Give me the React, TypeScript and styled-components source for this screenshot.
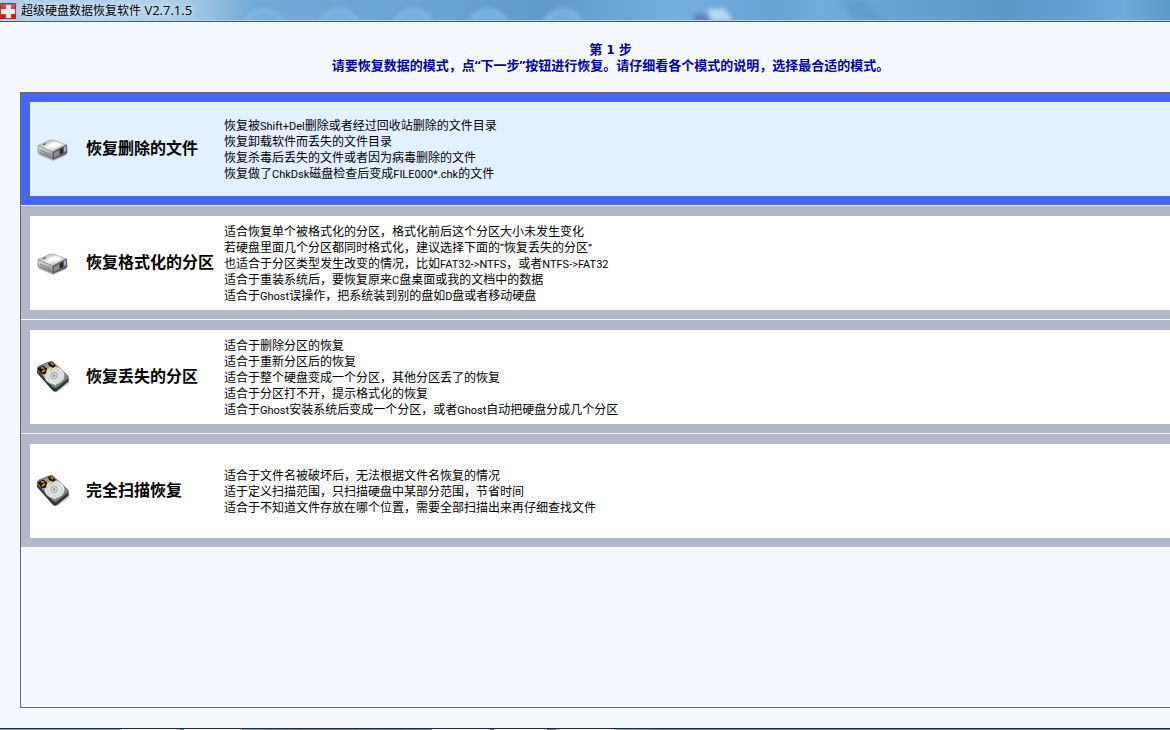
import React, { useState } from "react";
import styled, { createGlobalStyle } from "styled-components";

const cjk = '"Noto Sans CJK SC", sans-serif';

const GlobalStyle = createGlobalStyle`
  *, *::before, *::after { box-sizing: border-box; }
  body { margin: 0; background: #f4f8ff; }
`;

const Window = styled.div`
  display: flex;
  flex-direction: column;
  min-height: 100vh;
  overflow: hidden;
  font-family: ${cjk};
  font-size: 12px;
  line-height: 16px;
  color: #000;
`;

const TitleBar = styled.header`
  position: relative;
  display: flex;
  align-items: center;
  gap: 5px;
  height: 22px;
  border-bottom: 1px solid #44586c;
  box-shadow: inset 0 -1px #b4d4ee;
  background: linear-gradient(90deg, #aacbe6 0%, #b0d0ea 14%, #9cc5e5 17%, #70a8d6 22%, #69a4d3 38%, #5f9ac9 46%, #74aede 58%, #66a3d3 66%, #70abd9 70%, #5b97c6 86%, #649fd2 92%, #6eabd9 96%, #5c98c8 100%);
`;

const Glass = styled.svg`
  position: absolute;
  inset: 0;
  width: 100%;
  height: 20px;
`;

const AppIcon = styled.svg`
  position: relative;
  flex: none;
  width: 16px;
  height: 16px;
`;

const AppTitle = styled.h1`
  position: relative;
  margin: 0;
  font-family: "Open Sans", ${cjk};
  font-size: 12px;
  font-weight: 400;
  line-height: 16px;
  white-space: nowrap;
  text-shadow: 0 0 6px #e4f1fb, 0 0 6px #e4f1fb;
`;

const Version = styled.span`
  font-size: 13px;
  line-height: 1;
`;

const Content = styled.main`
  flex: 1;
  display: flex;
  flex-direction: column;
  padding: 19px 0 20px 20px;
`;

const Instructions = styled.div`
  padding: 0 0 19px 31px;
  text-align: center;
  color: #0000a8;
  font-family: "Open Sans", ${cjk};
  font-size: 13px;
  font-weight: 700;
  line-height: 16px;

  p, h2 { margin: 0; font-size: inherit; }
`;

const StepNumber = styled.span`
  font-family: "DejaVu Sans Condensed", "DejaVu Sans", sans-serif;
  line-height: 1;
`;

const ModeList = styled.ul`
  flex: 1;
  display: flex;
  flex-direction: column;
  gap: 1px;
  min-height: 616px;
  margin: 0;
  padding: 0;
  list-style: none;
  border: 1px solid #666;
  border-right: 0;
`;

const ModeButton = styled.button<{ $selected: boolean; $first: boolean }>`
  display: grid;
  grid-template-columns: 56px 138px 1fr;
  align-items: center;
  width: 100%;
  min-height: ${(p) => (p.$first ? 112 : 113)}px;
  padding: 0;
  border: solid ${(p) => (p.$selected ? "#4664ff" : "#b2b8c7")};
  border-width: ${(p) => (p.$first ? 9 : 10)}px 0 9px 9px;
  border-radius: 0;
  background: ${(p) => (p.$selected ? "#e2f0ff" : "#fff")};
  color: #000;
  font: inherit;
  text-align: left;
  cursor: pointer;
`;

const DriveIcon = styled.svg`
  width: 34px;
  height: 34px;
  margin-left: 6px;
`;

const ModeName = styled.strong`
  padding-bottom: 4px;
  font-size: 16px;
  line-height: 20px;
  white-space: nowrap;
`;

const Description = styled.span`
  display: flex;
  flex-direction: column;
  white-space: nowrap;
`;

const Line = styled.span`
  height: 16px;
`;

const Latin = styled.span`
  font-family: Roboto, sans-serif;
  font-size: 11px;
`;

const Quote = styled.span`
  font-family: "Open Sans", sans-serif;
`;

const Taskbar = styled.footer`
  height: 2px;
  border-top: 1px solid #1c2c3c;
  background: linear-gradient(90deg, #86a8c8 122px, #e6eaf0 122px 180px, #667c94 180px 184px, #e6eaf0 184px 242px, #86a8c8 242px, #7c8490 300px, #7890a8 432px, #e6eaf0 432px 490px, #667c94 490px 494px, #f4f6fa 494px 547px, #667c94 547px 556px, #e6eaf0 556px 614px, #a0b8d0 614px, #7890a8 660px);
`;

function mixed(text: string) {
  return text
    .split(/([\x21-\x7e“”]+)/)
    .map((part, i) => (i % 2 ? <Latin key={i}>{part}</Latin> : part));
}

function BoxDrive() {
  return (
    <DriveIcon viewBox="0 0 34 34" aria-hidden="true">
      <defs>
        <linearGradient id="boxTop" x1="0" y1="0" x2="1" y2="1">
          <stop offset="0" stopColor="#a4a4a4" />
          <stop offset=".5" stopColor="#f4f4f4" />
          <stop offset="1" stopColor="#989898" />
        </linearGradient>
        <linearGradient id="boxLeft" x1="0" y1="0" x2="0" y2="1">
          <stop offset="0" stopColor="#e4e4e4" />
          <stop offset="1" stopColor="#808080" />
        </linearGradient>
      </defs>
      <path d="M2 21l15 7 14-6-2 2-12 5-14-6z" fill="#777" opacity=".4" />
      <path d="M2 13.500L13 8.500q3-.8 6 0l11.500 4.500-13.500 7z" fill="url(#boxTop)" stroke="#a0a0a0" strokeWidth=".7" />
      <path d="M2 13.500L17 20v7.500L3 21.500q-1-.5-1-1.500z" fill="url(#boxLeft)" stroke="#858585" strokeWidth=".7" />
      <path d="M17 20l13.500-7 .5 7.500-1 1.500-13 5.500z" fill="#606063" stroke="#505050" strokeWidth=".7" />
      <path d="M18 21l5-2.500v4.500l-5 2.500z" fill="#8e8e8e" />
      <path d="M24 17.500l3-1.500v5l-3 1.500z" fill="#272738" />
      <path d="M28 15l2-1v5l-2 1z" fill="#aaa5df" />
      <path d="M4 18l11 5M4 20.500l11 5" stroke="#707070" strokeWidth=".8" />
      <path d="M7 13l3-1.500" stroke="#555" strokeWidth="1.200" />
      <path d="M12 13q3-3 8-2.500 6 1 4 3-4 3-8 2-4-1-4-2.500z" fill="#fff" opacity=".8" />
    </DriveIcon>
  );
}

function OpenDrive() {
  return (
    <DriveIcon viewBox="0 0 34 34" aria-hidden="true">
      <defs>
        <linearGradient id="openBody" x1="0" y1="0" x2="1" y2="1">
          <stop offset="0" stopColor="#777" />
          <stop offset=".5" stopColor="#b4b8b8" />
          <stop offset="1" stopColor="#4c5151" />
        </linearGradient>
        <radialGradient id="platter">
          <stop offset="0" stopColor="#aaa" />
          <stop offset=".4" stopColor="#e8e8e8" />
          <stop offset=".75" stopColor="#d3d6d6" />
          <stop offset="1" stopColor="#f2f2f2" />
        </radialGradient>
      </defs>
      <path d="M18 31l14-11 2 1-1 3-12 8z" fill="#888" opacity=".4" />
      <path d="M1 9v4l16 18q2 1.500 4 0l11-9q1-1 .8-4L19 28z" fill="#303637" />
      <path d="M1 9Q1 7 3 6L13 2q2-1 4 0l15 14q1 1.500-.5 3L21 27.500q-2 1-4-.5L2 11z" fill="url(#openBody)" stroke="#4c5050" strokeWidth=".7" />
      <ellipse cx="18.500" cy="15.500" rx="10" ry="9" fill="url(#platter)" stroke="#8c9090" strokeWidth=".6" />
      <circle cx="18" cy="15.500" r="3.500" fill="#d0d0d0" stroke="#999" strokeWidth=".7" />
      <circle cx="18" cy="15.500" r="1.200" fill="#999" />
      <path d="M2 8l5-2.500 4 3-1 5-4 1-4-5z" fill="#171411" />
      <path d="M12 3l4-1 4 4-3 2-4-2z" fill="#1d1711" />
      <path d="M5 7.500l3 1M6 12l3-2M15 3l2 2" stroke="#ef9320" strokeWidth="1.600" />
      <path d="M14.500 7l1 4" stroke="#f3bd59" strokeWidth="2" />
      <path d="M14 20l6 5M24 9l4 6" stroke="#fff" opacity=".8" />
    </DriveIcon>
  );
}

const modes = [
  {
    name: "恢复删除的文件",
    Icon: BoxDrive,
    lines: [
      "恢复被Shift+Del删除或者经过回收站删除的文件目录",
      "恢复卸载软件而丢失的文件目录",
      "恢复杀毒后丢失的文件或者因为病毒删除的文件",
      "恢复做了ChkDsk磁盘检查后变成FILE000*.chk的文件",
    ],
  },
  {
    name: "恢复格式化的分区",
    Icon: BoxDrive,
    lines: [
      "适合恢复单个被格式化的分区，格式化前后这个分区大小未发生变化",
      "若硬盘里面几个分区都同时格式化，建议选择下面的“恢复丢失的分区”",
      "也适合于分区类型发生改变的情况，比如FAT32->NTFS，或者NTFS->FAT32",
      "适合于重装系统后，要恢复原来C盘桌面或我的文档中的数据",
      "适合于Ghost误操作，把系统装到别的盘如D盘或者移动硬盘",
    ],
  },
  {
    name: "恢复丢失的分区",
    Icon: OpenDrive,
    lines: [
      "适合于删除分区的恢复",
      "适合于重新分区后的恢复",
      "适合于整个硬盘变成一个分区，其他分区丢了的恢复",
      "适合于分区打不开，提示格式化的恢复",
      "适合于Ghost安装系统后变成一个分区，或者Ghost自动把硬盘分成几个分区",
    ],
  },
  {
    name: "完全扫描恢复",
    Icon: OpenDrive,
    lines: [
      "适合于文件名被破坏后，无法根据文件名恢复的情况",
      "适于定义扫描范围，只扫描硬盘中某部分范围，节省时间",
      "适合于不知道文件存放在哪个位置，需要全部扫描出来再仔细查找文件",
    ],
  },
];

export default function App() {
  const [selected, setSelected] = useState(0);
  return (
    <Window lang="zh-CN">
      <GlobalStyle />
      <TitleBar>
        <Glass aria-hidden="true">
          <defs>
            <filter id="soft" x="-20%" y="-50%" width="140%" height="200%">
              <feGaussianBlur stdDeviation="2" />
            </filter>
          </defs>
          <g filter="url(#soft)">
            <g fill="#74b2e4" stroke="#8cc0ea" strokeWidth="3" opacity=".8">
              <circle cx="264" cy="30" r="20" />
              <circle cx="339" cy="30" r="20" />
              <circle cx="413" cy="30" r="20" />
              <circle cx="488" cy="30" r="20" />
              <circle cx="563" cy="30" r="20" />
            </g>
            <path d="M694 14h18v10h-18z" fill="#6484b8" />
            <path d="M707 9h18l8 12h-22z" fill="#b8d8f4" />
            <path d="M840 0h24l18 20h-26z" fill="#5590c0" opacity=".4" />
          </g>
        </Glass>
        <AppIcon viewBox="0 0 16 16" aria-hidden="true">
          <defs>
            <linearGradient id="red" x1="0" y1="0" x2="0" y2="1">
              <stop offset="0" stopColor="#d86a68" />
              <stop offset=".5" stopColor="#c41a1a" />
              <stop offset="1" stopColor="#e01010" />
            </linearGradient>
          </defs>
          <path d="M0 0h16v16H0z" fill="url(#red)" />
          <path d="M.5 .5h15v15H.5z" fill="none" stroke="#a03030" />
          <path d="M6 2h5v4h4v5h-4v4H6v-4H1V6h5z" fill="#f2f2f2" stroke="#b9a0a0" strokeWidth=".5" />
        </AppIcon>
        <AppTitle>
          超级硬盘数据恢复软件<Version> V2.7.1.5</Version>
        </AppTitle>
      </TitleBar>
      <Content>
        <Instructions>
          <h2>
            第<StepNumber> 1 </StepNumber>步
          </h2>
          <p>
            请要恢复数据的模式，点<Quote>“</Quote>下一步<Quote>”</Quote>按钮进行恢复。请仔细看各个模式的说明，选择最合适的模式。
          </p>
        </Instructions>
        <ModeList>
          {modes.map(({ name, Icon, lines }, i) => (
            <li key={name}>
              <ModeButton
                type="button"
                aria-pressed={selected === i}
                $selected={selected === i}
                $first={i === 0}
                onClick={() => setSelected(i)}
              >
                <Icon />
                <ModeName>{name}</ModeName>
                <Description>
                  {lines.map((line) => (
                    <Line key={line}>{mixed(line)}</Line>
                  ))}
                </Description>
              </ModeButton>
            </li>
          ))}
        </ModeList>
      </Content>
      <Taskbar />
    </Window>
  );
}
